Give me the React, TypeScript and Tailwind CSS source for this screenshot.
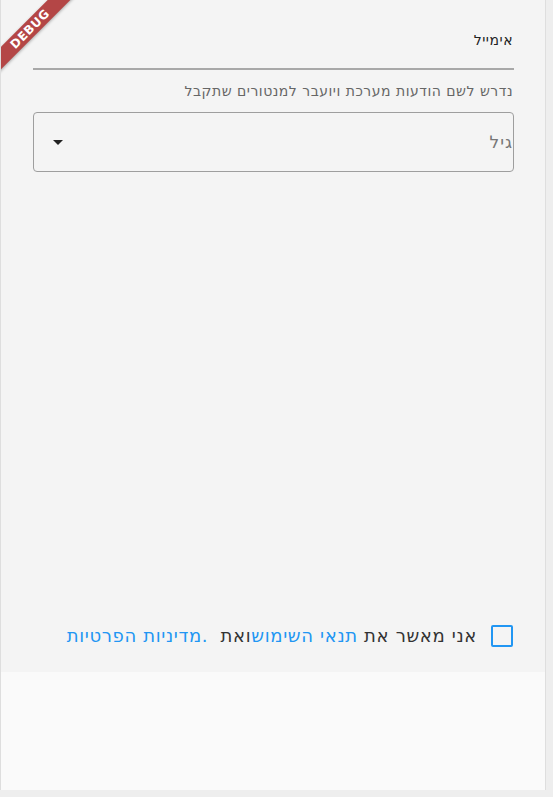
import React, { useState } from 'react';

export default function App() {
  const [agreed, setAgreed] = useState(false);

  return (
    <div className="w-[553px] h-[797px] bg-[#eeeeee] font-['DejaVu_Sans',sans-serif] overflow-hidden">
      <div dir="rtl" className="relative w-[546px] h-[790px] bg-[#fafafa] border-l border-r border-[#dedede] flex flex-col overflow-hidden">
        {/* form area */}
        <div className="h-[672px] bg-[#f4f4f4] pl-[32px] pr-[31px] pt-[31px] flex flex-col">
          <div className="flex flex-col">
            <label className="text-[14px] tracking-[0.5px] text-[#222] leading-[18px] pr-[1px]">אימייל</label>
            <div className="mt-[19px] h-[2px] bg-[#a8a8a8]" />
          </div>
          <p className="mt-[12px] text-[14px] tracking-[0.5px] text-[#666] leading-[18px] pr-[1px]">נדרש לשם הודעות מערכת ויועבר למנטורים שתקבל</p>

          <div className="mt-[12px] h-[60px] border border-[#9e9e9e] rounded-[4px] flex items-center justify-between">
            <span className="text-[17px] tracking-[1px] text-[#777] leading-none">גיל</span>
            <svg width="10" height="5" viewBox="0 0 10 5" className="ml-[19px]">
              <path d="M0 0 L10 0 L5 5 Z" fill="#222" />
            </svg>
          </div>

          <div className="flex-1" />

          <div className="mb-[25px] flex items-center gap-[14px] pr-[1px]">
            <button
              type="button"
              onClick={() => setAgreed(!agreed)}
              className="w-[22px] h-[22px] border-2 border-[#2196f3] rounded-[2px] flex items-center justify-center shrink-0"
            >
              {agreed && (
                <svg width="14" height="14" viewBox="0 0 24 24">
                  <path d="M4 12 L10 18 L20 6" stroke="#2196f3" strokeWidth="3" fill="none" />
                </svg>
              )}
            </button>
            <p className="text-[18px] tracking-[0.65px] text-[#333] leading-[22px]">
              אני מאשר את <a className="text-[#2196f3] cursor-pointer">תנאי השימוש</a>ואת <a className="text-[#2196f3] cursor-pointer mr-[6px]">.מדיניות הפרטיות</a>
            </p>
          </div>
        </div>

        {/* debug banner */}
        <div className="absolute left-[-31.5px] top-[20.5px] w-[120px] h-[16px] bg-[#b44646] -rotate-45 shadow-[0_1px_3px_rgba(0,0,0,0.3)] flex items-center justify-center">
          <span dir="ltr" className="text-white text-[12px] font-bold tracking-[0.6px] leading-none">DEBUG</span>
        </div>
      </div>
    </div>
  );
}
